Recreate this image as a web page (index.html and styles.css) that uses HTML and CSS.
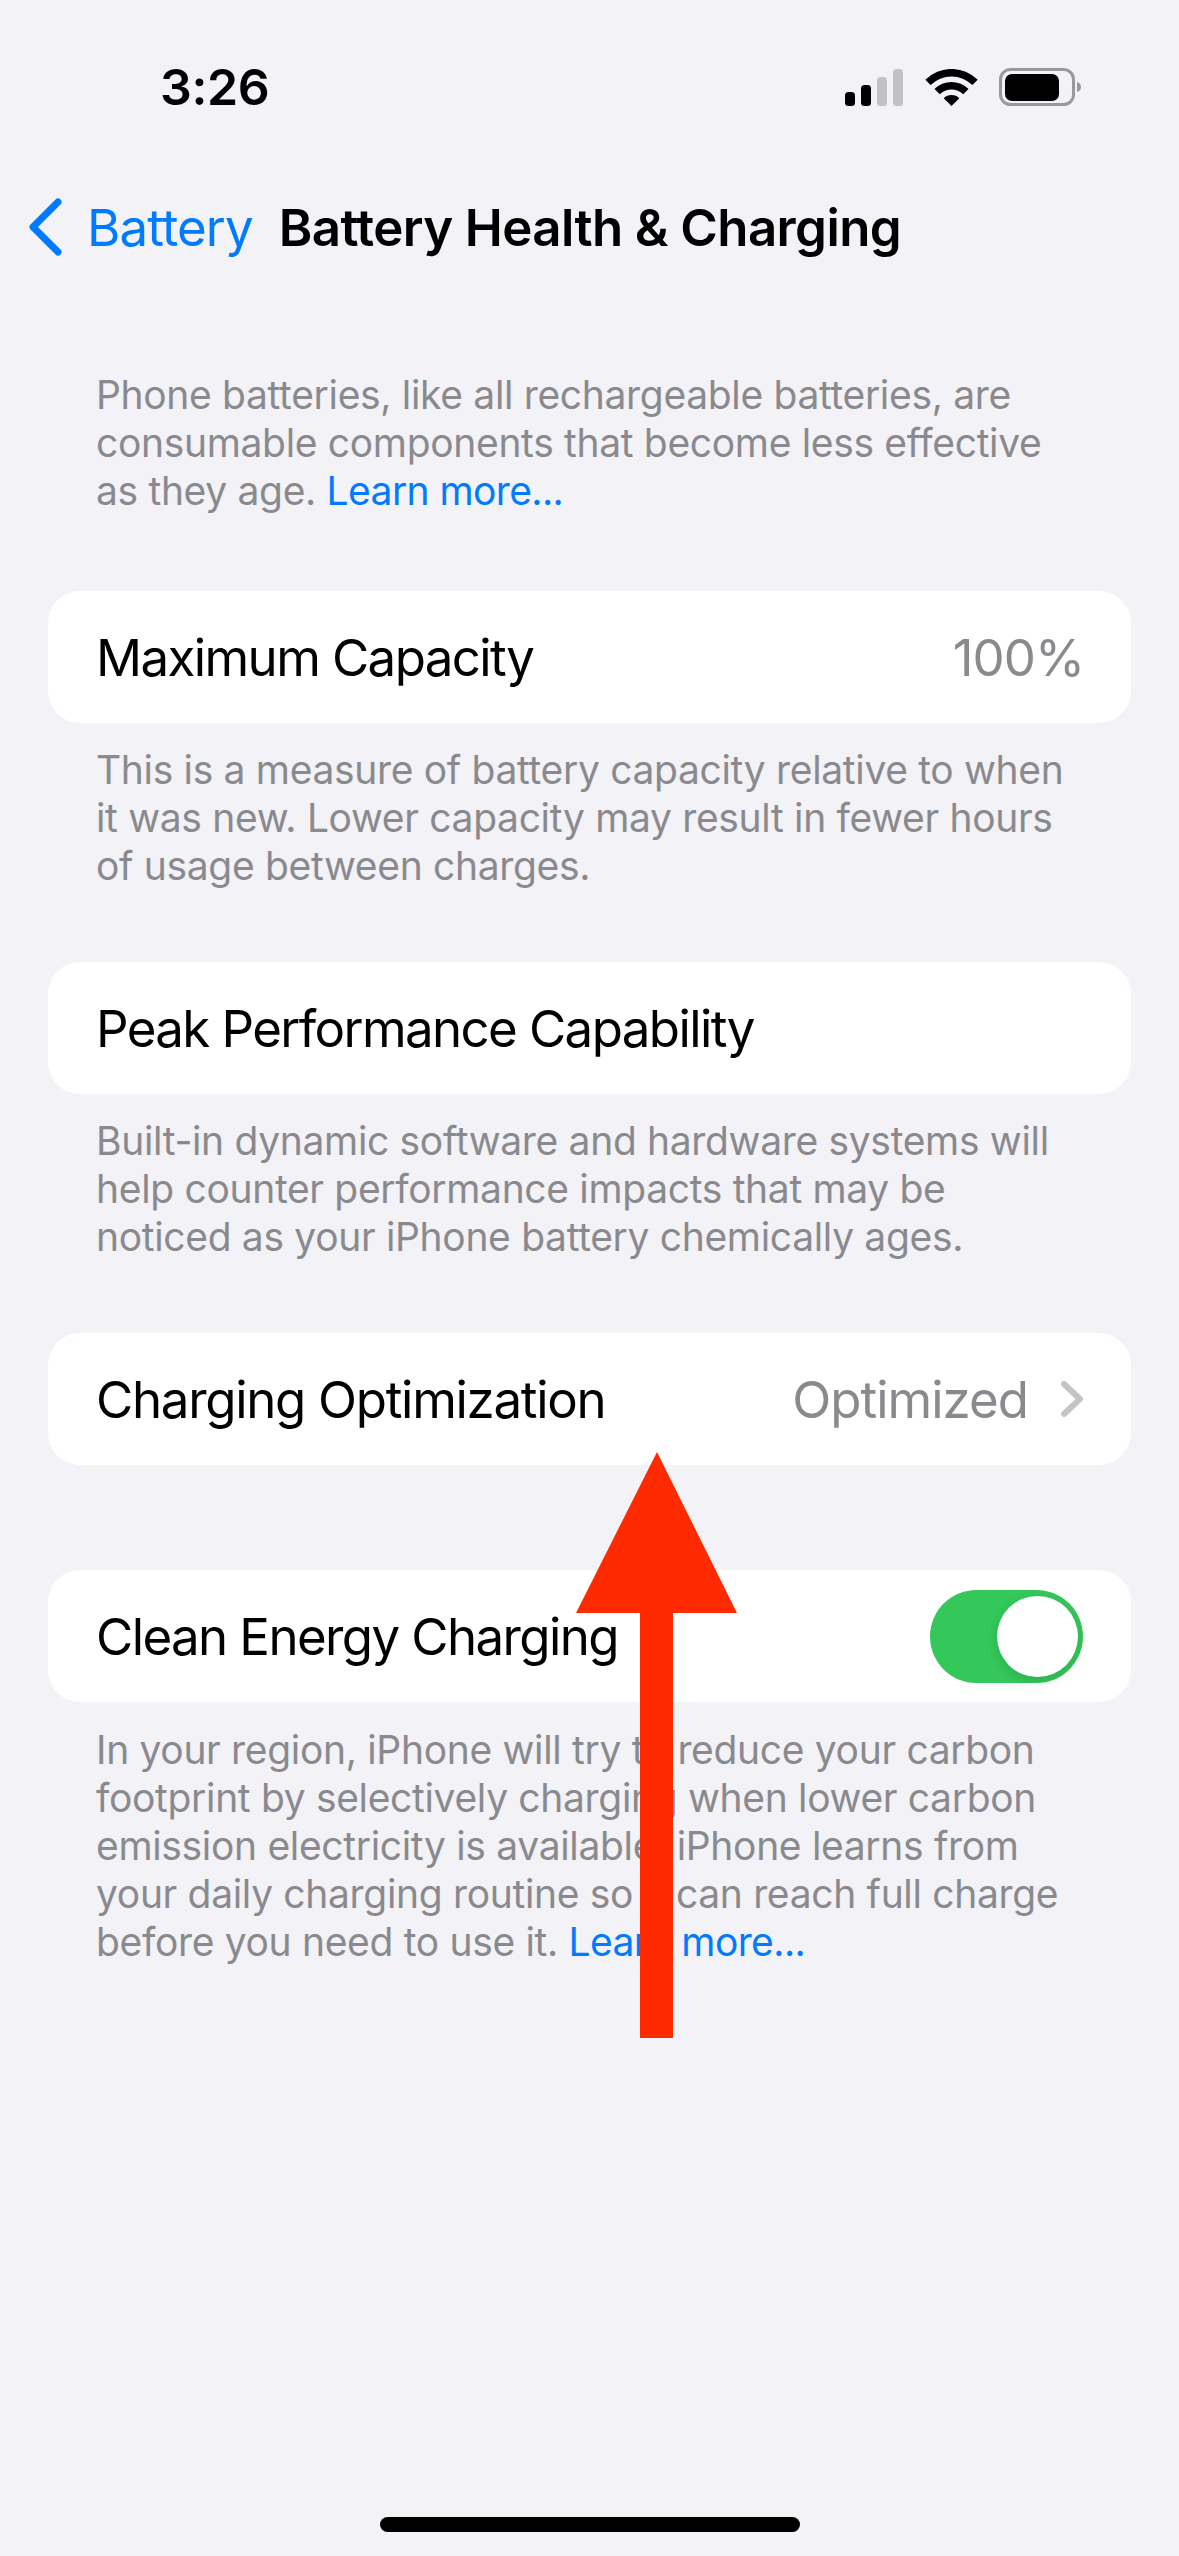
FILE: index.html
```html
<!DOCTYPE html>
<html lang="en">
<head>
<meta charset="utf-8">
<title>Battery Health &amp; Charging</title>
<link rel="stylesheet" href="styles.css">
</head>
<body>
<div class="screen">
  <header class="status-bar">
    <span class="clock">3:26</span>
    <div class="status-icons">
      <svg class="signal" viewBox="0 0 58 37" aria-hidden="true">
        <rect class="bar-on" x="0" y="23" width="10" height="14" rx="3.5"/>
        <rect class="bar-on" x="16" y="16" width="10" height="21" rx="3.5"/>
        <rect class="bar-off" x="32" y="8" width="10" height="29" rx="3.5"/>
        <rect class="bar-off" x="48" y="0" width="10" height="37" rx="3.5"/>
      </svg>
      <svg class="wifi" viewBox="-1 0 53 37" aria-hidden="true">
        <path d="M-.7 10.8A37 37 0 0 1 51.7 10.8L46.4 16.1A29.5 29.5 0 0 0 4.6 16.1Z"/>
        <path d="M8.5 20A24 24 0 0 1 42.5 20L37.2 25.3A16.5 16.5 0 0 0 13.8 25.3Z"/>
        <path d="M17.7 29.2A11 11 0 0 1 33.3 29.2L25.5 37Z"/>
      </svg>
      <svg class="battery" viewBox="0 0 82 38" aria-hidden="true">
        <rect class="battery-shell" x="1.5" y="1.5" width="73" height="35" rx="10"/>
        <rect x="6" y="6" width="54" height="27" rx="7"/>
        <path class="battery-cap" d="M78 14c2.500.5 4 2.500 4 5s-1.500 4.500-4 5Z"/>
      </svg>
    </div>
  </header>

  <nav class="nav-bar">
    <a class="back">
      <svg class="back-chevron" viewBox="0 0 34 58" aria-hidden="true">
        <path d="M30 4 5 29 30 54"/>
      </svg>
      <span>Battery</span>
    </a>
    <h1 class="nav-title">Battery Health &amp; Charging</h1>
  </nav>

  <main class="content">
    <p class="note intro">Phone batteries, like all rechargeable batteries, are<br>consumable components that become less effective<br>as they age. <a class="link">Learn more...</a></p>

    <section class="card card-capacity">
      <span class="label">Maximum Capacity</span>
      <span class="value value-plain">100%</span>
    </section>
    <p class="note note-tight">This is a measure of battery capacity relative to when<br>it was new. Lower capacity may result in fewer hours<br>of usage between charges.</p>

    <section class="card card-spaced">
      <span class="label">Peak Performance Capability</span>
    </section>
    <p class="note note-tight">Built-in dynamic software and hardware systems will<br>help counter performance impacts that may be<br>noticed as your iPhone battery chemically ages.</p>

    <section class="card card-spaced">
      <span class="label label-wide">Charging Optimization</span>
      <span class="value">Optimized</span>
      <svg class="disclosure" viewBox="0 0 22 36" aria-hidden="true">
        <path d="M3 3 19 18 3 33"/>
      </svg>
    </section>

    <section class="card card-toggle">
      <span class="label">Clean Energy Charging</span>
      <span class="switch"><span class="knob"></span></span>
    </section>
    <p class="note">In your region, iPhone will try to reduce your carbon<br>footprint by selectively charging when lower carbon<br>emission electricity is available. iPhone learns from<br>your daily charging routine so it can reach full charge<br>before you need to use it. <a class="link">Learn more...</a></p>
  </main>

  <div class="home-indicator"></div>

  <svg class="callout-arrow" viewBox="0 0 161 586" aria-hidden="true">
    <path d="M81 0 161 161H97V586H64V161H0Z"/>
  </svg>
</div>
</body>
</html>
```
FILE: styles.css
```css
* { box-sizing: border-box; }

html, body { margin: 0; padding: 0; }

body {
  background: #f2f2f7;
  font-family: Inter, "Liberation Sans", sans-serif;
  color: #000;
}

.screen {
  position: relative;
  width: 1179px;
  height: 2556px;
  display: flex;
  flex-direction: column;
  overflow: hidden;
  background: #f2f2f7;
}

/* Status bar */
.status-bar {
  height: 164px;
  padding: 62px 98px 0 160px;
  display: flex;
  align-items: flex-start;
  justify-content: space-between;
  flex: none;
}

.clock {
  font-size: 50px;
  font-weight: 600;
  letter-spacing: -0.4px;
  line-height: 1;
}

.status-icons {
  display: flex;
  align-items: flex-end;
  margin-top: 6px;
}

.signal { width: 58px; height: 37px; margin-right: 22px; }
.bar-on { fill: #000; }
.bar-off { fill: #c1c1c6; }
.wifi { width: 53px; height: 37px; margin-right: 21px; }
.battery { width: 82px; height: 38px; }
.battery-shell { fill: none; stroke: #98989d; stroke-width: 3; }
.battery-cap { fill: #98989d; }

/* Navigation bar */
.nav-bar {
  height: 126px;
  flex: none;
  display: flex;
  align-items: center;
  padding-left: 28px;
}

.back {
  display: flex;
  align-items: center;
  color: #007aff;
  font-size: 51px;
  letter-spacing: -0.9px;
  margin-right: 26px;
}

.back-chevron {
  width: 34px;
  height: 58px;
  margin-right: 25px;
}

.back-chevron path {
  fill: none;
  stroke: #007aff;
  stroke-width: 7;
  stroke-linecap: round;
  stroke-linejoin: round;
}

.nav-title {
  margin: 0;
  font-size: 51px;
  font-weight: 600;
  letter-spacing: -0.6px;
}

/* Grouped list */
.content {
  padding: 81px 48px 0;
  flex: none;
}

.note {
  margin: 24px 0 0;
  padding: 0 48px;
  font-size: 39px;
  line-height: 48px;
  color: #8a8a8e;
  letter-spacing: -0.33px;
  white-space: nowrap;
}

.intro { margin-top: 0; }
.note-tight { margin-top: 23px; }

.link { color: #007aff; letter-spacing: -0.6px; }

.card {
  height: 132px;
  background: #fff;
  border-radius: 32px;
  padding: 0 48px;
  display: flex;
  align-items: center;
}

.card-capacity { margin-top: 76px; }
.card-spaced { margin-top: 72px; }
.card-toggle { margin-top: 105px; }

.label {
  flex: 1;
  font-size: 51px;
  letter-spacing: -1.6px;
  white-space: nowrap;
}

.label-wide { letter-spacing: -1.3px; }

.value {
  font-size: 51px;
  letter-spacing: -1px;
  color: #8a8a8e;
}

.value-plain { margin-right: -1px; }

.disclosure {
  width: 22px;
  height: 36px;
  margin-left: 33px;
}

.disclosure path {
  fill: none;
  stroke: #c4c4c7;
  stroke-width: 6;
  stroke-linecap: round;
  stroke-linejoin: round;
}

.switch {
  position: relative;
  width: 153px;
  height: 93px;
  border-radius: 47px;
  background: #34c759;
  flex: none;
}

.knob {
  position: absolute;
  top: 6px;
  right: 5px;
  width: 81px;
  height: 81px;
  border-radius: 50%;
  background: #fff;
  box-shadow: 0 4px 12px rgba(0, 0, 0, 0.12);
}

/* Home indicator */
.home-indicator {
  width: 420px;
  height: 15px;
  margin: auto auto 24px;
  border-radius: 8px;
  background: #000;
}

/* Annotation drawn over the screen */
.callout-arrow {
  position: absolute;
  left: 576px;
  top: 1452px;
  width: 161px;
  height: 586px;
  fill: #ff2a00;
}
```
